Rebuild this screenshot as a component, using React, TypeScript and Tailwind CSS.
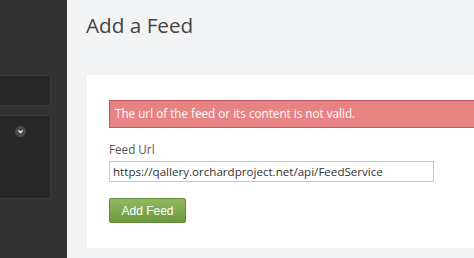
export default function App() {
  return (
    <div className="flex h-[258px] w-[474px] overflow-hidden font-['Open_Sans',sans-serif]">
      <aside className="w-[67px] shrink-0 bg-[#323232] pt-[75px]">
        <div className="h-[31px] w-[51px] border border-l-0 border-[#3c3c3c] bg-[#272727]" />
        <div className="mt-[9px] h-[84px] w-[51px] border border-l-0 border-[#3c3c3c] bg-[#272727] pt-[10px] pl-[15px]">
          <span className="flex h-[11px] w-[11px] items-center justify-center rounded-full bg-[#4a4a4a]">
            <svg viewBox="0 0 10 10" className="h-[7px] w-[7px]">
              <path d="M2 3.5 L5 6.5 L8 3.5" fill="none" stroke="#f0f0f0" strokeWidth="1.8" />
            </svg>
          </span>
        </div>
      </aside>
      <main className="flex flex-1 flex-col bg-[#f2f3f5] pl-[19px]">
        <h1 className="mt-[10px] h-[30px] text-[20.7px] leading-[30px] text-[#444]">Add a Feed</h1>
        <section className="mt-[35px] ml-px h-[173px] bg-white pt-[25px] pl-[22px]">
          <div className="flex h-[28px] items-center border border-r-0 border-[#c9575a] bg-[#e88383] pl-[5px] text-[11.7px] text-white">
            The url of the feed or its content is not valid.
          </div>
          <label className="mt-[12px] block text-[11.7px] leading-[18px] text-[#555]">Feed Url</label>
          <input
            readOnly
            value="https://qallery.orchardproject.net/api/FeedService"
            className="mt-[3px] h-[21px] w-[325px] border border-[#c8c8c8] px-[3px] text-[11.6px] text-[#333] outline-none"
          />
          <button className="mt-[16px] block h-[25px] w-[77px] rounded-[2px] border border-[#628c37] bg-gradient-to-b from-[#94b862] to-[#6c983c] font-['Liberation_Sans',sans-serif] text-[12px] text-white">
            Add Feed
          </button>
        </section>
      </main>
    </div>
  );
}
